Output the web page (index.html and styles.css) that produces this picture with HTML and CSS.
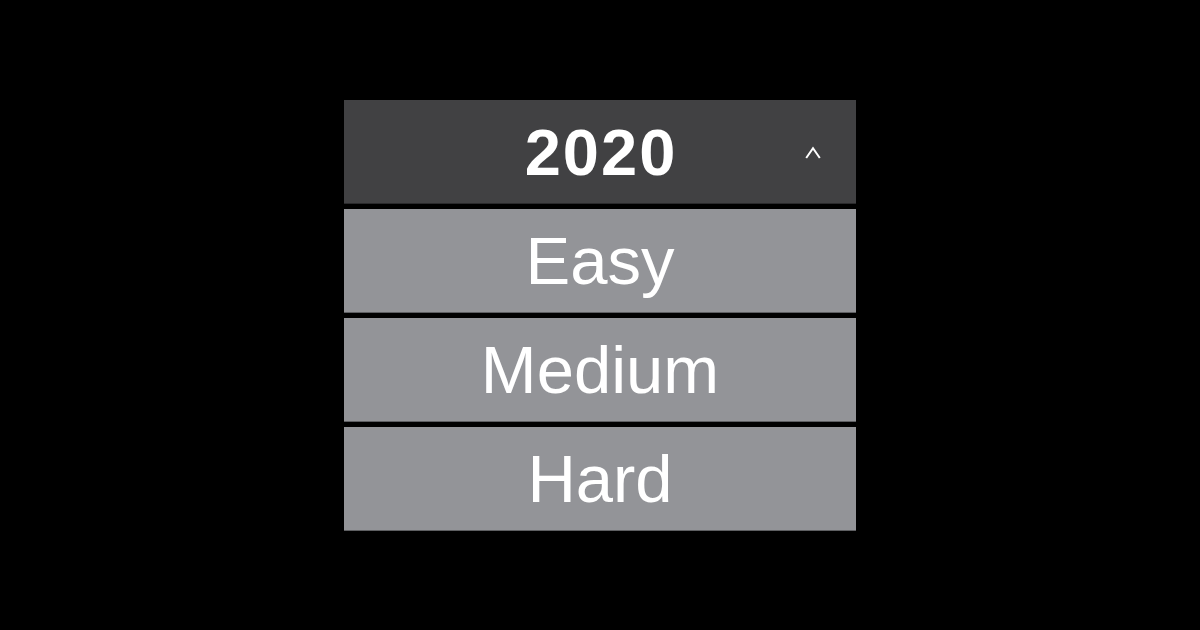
FILE: index.html
```html
<!DOCTYPE html>
<html lang="en">
<head>
<meta charset="utf-8">
<title>Difficulty picker</title>
<link rel="stylesheet" href="styles.css">
</head>
<body>
<main class="stage">
  <div class="picker">
    <div class="picker-head">
      <span class="picker-year">2020</span>
      <svg class="picker-caret" width="16" height="13" viewBox="0 0 16 13" aria-hidden="true">
        <polyline points="1.2,12 8,2.2 14.8,12" fill="none" stroke="#fff" stroke-width="2"/>
      </svg>
    </div>
    <div class="picker-option">Easy</div>
    <div class="picker-option">Medium</div>
    <div class="picker-option">Hard</div>
  </div>
</main>
</body>
</html>
```
FILE: styles.css
```css
html, body {
  margin: 0;
  padding: 0;
  background: #000;
}

.stage {
  width: 1200px;
  height: 630px;
  display: flex;
  justify-content: center;
  padding-top: 100px;
  box-sizing: border-box;
}

.picker {
  width: 512px;
  display: flex;
  flex-direction: column;
  gap: 5px;
}

.picker-head,
.picker-option {
  height: 103px;
  border-bottom: 1px solid #2a2a2c;
  display: flex;
  align-items: center;
  justify-content: center;
  color: #fff;
  font-family: "Liberation Sans", Arial, sans-serif;
}

.picker-head {
  position: relative;
  background: #414143;
}

.picker-year {
  font-size: 65px;
  font-weight: 700;
  letter-spacing: 2px;
  margin-right: -2px;
  padding-top: 2px;
  line-height: 1;
}

.picker-caret {
  position: absolute;
  right: 35px;
  top: 46px;
}

.picker-option {
  background: #939498;
  border-bottom-color: #5e5f62;
  font-size: 67px;
  line-height: 1;
}
```
